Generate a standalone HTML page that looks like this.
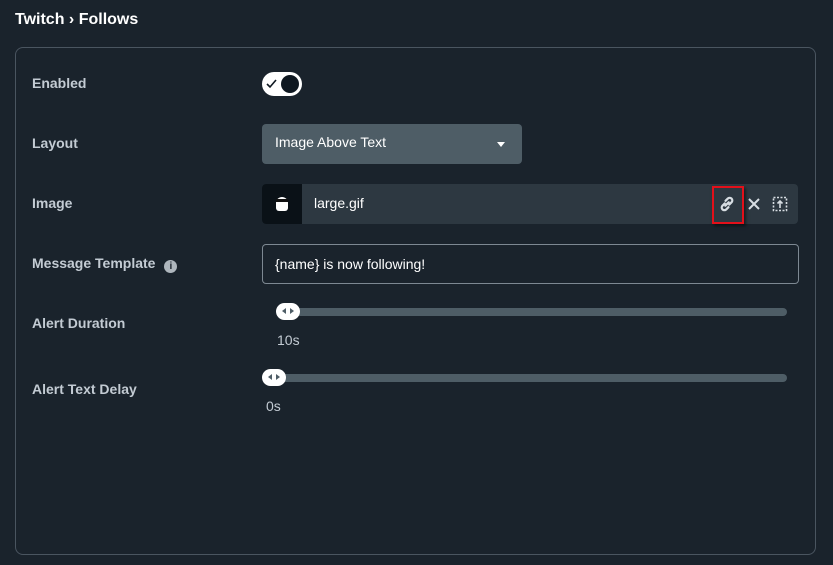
<!DOCTYPE html>
<html><head><style>
body{margin:0;width:833px;height:565px;background:#1a232c;font-family:"Liberation Sans",sans-serif;position:relative;overflow:hidden}
.a{position:absolute}
.lbl{position:absolute;left:32px;color:#c3cbd3;font-size:14px;font-weight:bold}
</style></head><body>
<div class="a" style="left:15px;top:11px;color:#fff;font-size:16px;font-weight:bold">Twitch › Follows</div>
<div class="a" style="left:15px;top:47px;width:799px;height:506px;border:1px solid #4a5560;border-radius:8px"></div>
<div class="lbl" style="top:75px">Enabled</div>
<div class="lbl" style="top:135px">Layout</div>
<div class="lbl" style="top:195px">Image</div>
<div class="lbl" style="top:255px">Message Template <span style="display:inline-block;width:13px;height:13px;border-radius:50%;background:#aeb6bd;color:#1a232c;font-size:10px;text-align:center;line-height:13px;margin-left:5px;vertical-align:-1px">i</span></div>
<div class="lbl" style="top:315px">Alert Duration</div>
<div class="lbl" style="top:381px">Alert Text Delay</div>
<div class="a" style="left:262px;top:72px;width:40px;height:24px;border-radius:12px;background:#fff"></div>
<div class="a" style="left:281px;top:75px;width:18px;height:18px;border-radius:50%;background:#0e1720"></div>
<svg class="a" style="left:265px;top:78px" width="13" height="12"><path d="M2 6l3 3 6-7" stroke="#0e1720" stroke-width="1.6" fill="none"/></svg>
<div class="a" style="left:262px;top:124px;width:260px;height:40px;border-radius:4px;background:#4e5d66"></div>
<div class="a" style="left:275px;top:134px;color:#fff;font-size:14px">Image Above Text</div>
<div class="a" style="left:497px;top:142px;width:0;height:0;border-left:4px solid transparent;border-right:4px solid transparent;border-top:5px solid #fff"></div>
<div class="a" style="left:262px;top:184px;width:536px;height:40px;border-radius:4px;background:#2d3841"></div>
<div class="a" style="left:262px;top:184px;width:40px;height:40px;border-radius:4px 0 0 4px;background:#0a1117"></div>
<div class="a" style="left:276px;top:197px;width:12px;height:14px;border-radius:6px 6px 3px 3px;background:#fff"></div>
<div class="a" style="left:276px;top:199px;width:12px;height:3px;background:#111"></div>
<div class="a" style="left:314px;top:195px;color:#fff;font-size:14px">large.gif</div>
<div class="a" style="left:712px;top:186px;width:28px;height:34px;border:2px solid #e3101a;box-shadow:2px 2px 3px rgba(0,0,0,.5)"></div>
<svg class="a" style="left:718px;top:195px" width="18" height="18" viewBox="0 0 16 16"><g stroke="#d7dde2" stroke-width="2" fill="none" stroke-linecap="round"><path d="M6.5 9.5l3-3"/><path d="M6 7.5l-2 2a2.3 2.3 0 0 0 3.3 3.3l2-2"/><path d="M10 8.5l2-2a2.3 2.3 0 0 0-3.3-3.3l-2 2"/></g></svg>
<svg class="a" style="left:747px;top:197px" width="14" height="14"><path d="M2 2l10 10M12 2L2 12" stroke="#d7dde2" stroke-width="2"/></svg>
<svg class="a" style="left:772px;top:196px" width="16" height="16"><rect x="1.5" y="1.5" width="13" height="13" fill="none" stroke="#d7dde2" stroke-width="1.6" stroke-dasharray="2 1.5"/><path d="M8 12V5M5.5 7.5L8 5l2.5 2.5" stroke="#d7dde2" stroke-width="1.6" fill="none"/></svg>
<div class="a" style="left:262px;top:244px;width:535px;height:38px;border:1px solid #7d8892;border-radius:4px"></div>
<div class="a" style="left:275px;top:256px;color:#fff;font-size:14px">{name} is now following!</div>
<div class="a" style="left:286px;top:308px;width:501px;height:8px;border-radius:4px;background:#4e5d66"></div>
<div class="a" style="left:276px;top:303px;width:24px;height:17px;border-radius:9px;background:#fff"></div>
<div class="a" style="left:282px;top:308px;width:0;height:0;border-top:3px solid transparent;border-bottom:3px solid transparent;border-right:4px solid #4e5d66"></div>
<div class="a" style="left:290px;top:308px;width:0;height:0;border-top:3px solid transparent;border-bottom:3px solid transparent;border-left:4px solid #4e5d66"></div>
<div class="a" style="left:277px;top:332px;color:#c3cbd3;font-size:14px">10s</div>
<div class="a" style="left:272px;top:374px;width:515px;height:8px;border-radius:4px;background:#4e5d66"></div>
<div class="a" style="left:262px;top:369px;width:24px;height:17px;border-radius:9px;background:#fff"></div>
<div class="a" style="left:268px;top:374px;width:0;height:0;border-top:3px solid transparent;border-bottom:3px solid transparent;border-right:4px solid #4e5d66"></div>
<div class="a" style="left:276px;top:374px;width:0;height:0;border-top:3px solid transparent;border-bottom:3px solid transparent;border-left:4px solid #4e5d66"></div>
<div class="a" style="left:266px;top:398px;color:#c3cbd3;font-size:14px">0s</div>
</body></html>
